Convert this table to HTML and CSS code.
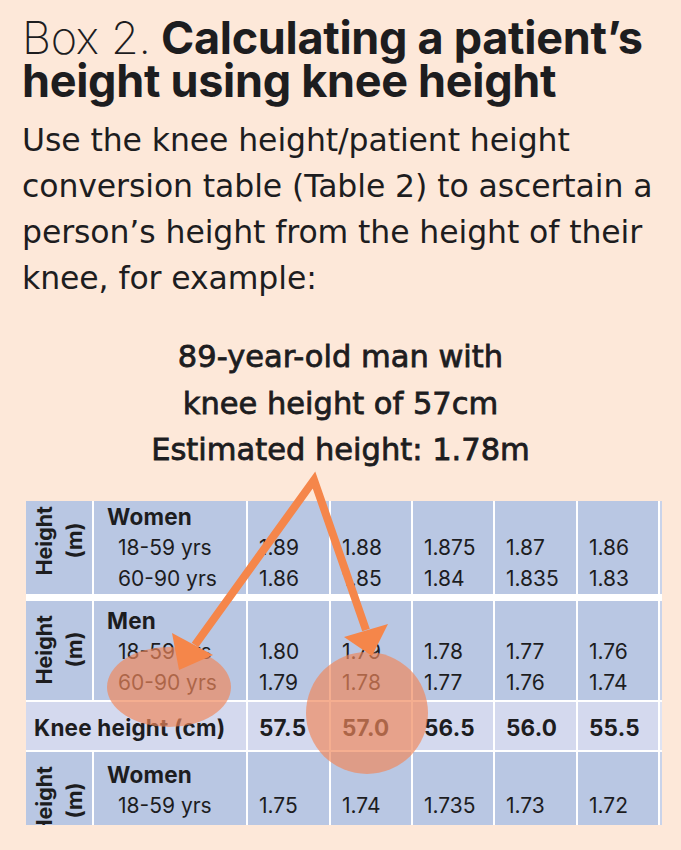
FILE: index.html
```html
<!DOCTYPE html>
<html lang="en">
<head>
<meta charset="utf-8">
<title>Box 2</title>
<link rel="stylesheet" href="styles.css">
</head>
<body>
<div class="page">
  <h1 class="title"><span class="title-light">Box 2.</span> <span class="title-bold">Calculating a patient’s<br>height using knee height</span></h1>
  <p class="intro">Use the knee height/patient height<br>conversion table (Table 2) to ascertain a<br>person’s height from the height of their<br>knee, for example:</p>
  <p class="example">89-year-old man with<br>knee height of 57cm<br>Estimated height: 1.78m</p>

  <div class="table">
    <div class="row group g1">
      <div class="cell side"><span class="vert">Height<br>(m)</span></div>
      <div class="cell labels"><div class="sex">Women</div><div class="age">18-59 yrs</div><div class="age">60-90 yrs</div></div>
      <div class="cell vals"><div class="blank"></div><div>1.89</div><div>1.86</div></div>
      <div class="cell vals"><div class="blank"></div><div>1.88</div><div>1.85</div></div>
      <div class="cell vals"><div class="blank"></div><div>1.875</div><div>1.84</div></div>
      <div class="cell vals"><div class="blank"></div><div>1.87</div><div>1.835</div></div>
      <div class="cell vals"><div class="blank"></div><div>1.86</div><div>1.83</div></div>
      <div class="cell strip"></div>
    </div>
    <div class="row group g2">
      <div class="cell side"><span class="vert">Height<br>(m)</span></div>
      <div class="cell labels"><div class="sex">Men</div><div class="age">18-59 yrs</div><div class="age">60-90 yrs</div></div>
      <div class="cell vals"><div class="blank"></div><div>1.80</div><div>1.79</div></div>
      <div class="cell vals"><div class="blank"></div><div>1.79</div><div>1.78</div></div>
      <div class="cell vals"><div class="blank"></div><div>1.78</div><div>1.77</div></div>
      <div class="cell vals"><div class="blank"></div><div>1.77</div><div>1.76</div></div>
      <div class="cell vals"><div class="blank"></div><div>1.76</div><div>1.74</div></div>
      <div class="cell strip"></div>
    </div>
    <div class="row knee">
      <div class="cell knee-label">Knee height (cm)</div>
      <div class="cell knee-val">57.5</div>
      <div class="cell knee-val">57.0</div>
      <div class="cell knee-val">56.5</div>
      <div class="cell knee-val">56.0</div>
      <div class="cell knee-val">55.5</div>
      <div class="cell strip"></div>
    </div>
    <div class="row group g3">
      <div class="cell side"><span class="vert">Height<br>(m)</span></div>
      <div class="cell labels"><div class="sex">Women</div><div class="age">18-59 yrs</div></div>
      <div class="cell vals"><div class="blank"></div><div>1.75</div></div>
      <div class="cell vals"><div class="blank"></div><div>1.74</div></div>
      <div class="cell vals"><div class="blank"></div><div>1.735</div></div>
      <div class="cell vals"><div class="blank"></div><div>1.73</div></div>
      <div class="cell vals"><div class="blank"></div><div>1.72</div></div>
      <div class="cell strip"></div>
    </div>
  </div>

  <svg class="overlay" width="681" height="850" viewBox="0 0 681 850" aria-hidden="true">
    <ellipse cx="169" cy="687" rx="62" ry="40" class="spot"/>
    <circle cx="367" cy="713" r="61" class="spot"/>
    <polyline points="195,645 314,480 366,630" class="arrow-line"/>
    <polygon points="172,633 213,655 179,670" class="arrow-head"/>
    <polygon points="344,637 388,624 372,656" class="arrow-head"/>
  </svg>
</div>
</body>
</html>
```
FILE: styles.css
```css
html, body {
  margin: 0;
  padding: 0;
  background: #fde8d9;
}
.page {
  position: relative;
  width: 681px;
  height: 850px;
  overflow: hidden;
  background: #fde8d9;
  color: #1d1d1f;
  font-family: Inter, "Liberation Sans", sans-serif;
}
.title {
  margin: 0;
  padding: 16px 0 0 22px;
  font-size: 45px;
  line-height: 43px;
  letter-spacing: -0.3px;
  font-weight: 700;
}
.title-light {
  font-weight: 200;
}
.intro {
  margin: 15px 0 0 22px;
  font-family: "DejaVu Sans", Inter, sans-serif;
  font-size: 31.5px;
  line-height: 46px;
  font-weight: 400;
  letter-spacing: -0.1px;
  width: 659px;
}
.example {
  margin: 33px 0 0 0;
  text-align: center;
  font-family: "DejaVu Sans", Inter, sans-serif;
  font-size: 30.5px;
  line-height: 46.5px;
  font-weight: 400;
  -webkit-text-stroke: 0.8px #1d1d1f;
}
.table {
  margin: 27px 0 0 26px;
  width: 636px;
  height: 324px;
  overflow: hidden;
  background: #ffffff;
  display: flex;
  flex-direction: column;
  gap: 2px;
}
.row {
  display: grid;
  grid-template-columns: 66px 152px 81px 80px 80px 81px 80px 2px;
  column-gap: 2px;
  flex: none;
}
.g1 { height: 92px; margin-bottom: 6px; }
.g2 { height: 99px; }
.knee { height: 48px; }
.g3 { height: 99px; }
.cell {
  background: #b9c7e3;
  font-size: 21px;
  line-height: 31px;
}
.strip {
  background: #c9d3ea;
}
.side {
  display: flex;
  align-items: center;
  justify-content: center;
}
.g1 .side { padding-bottom: 12px; }
.vert {
  writing-mode: vertical-rl;
  transform: rotate(180deg);
  font-weight: 700;
  text-align: center;
  font-size: 21.5px;
  line-height: 30px;
}
.labels, .vals {
  display: flex;
  flex-direction: column;
}
.g1 .labels { padding-top: 0; }
.g1 .vals { padding-top: 0; }
.g2 .labels, .g2 .vals { padding-top: 4px; }
.g3 .labels, .g3 .vals { padding-top: 7px; }
.sex {
  padding-left: 13px;
  font-weight: 700;
  font-size: 22.5px;
  letter-spacing: 0.2px;
}
.age {
  padding-left: 24px;
}
.blank { height: 31px; }
.vals {
  padding-left: 11px;
}
.knee .cell {
  background: #d4d9ee;
  font-weight: 700;
  font-size: 22.5px;
  letter-spacing: 0.2px;
  display: flex;
  align-items: center;
  padding-top: 3px;
}
.knee .strip { background: #dfe3f3; }
.knee-label {
  grid-column: span 2;
  padding-left: 8px;
}
.knee-val {
  padding-left: 11px;
}
.overlay {
  position: absolute;
  left: 0;
  top: 0;
  pointer-events: none;
}
.spot {
  fill: rgba(240, 136, 92, 0.68);
}
.arrow-line {
  fill: none;
  stroke: #f5864a;
  stroke-width: 8;
  stroke-linejoin: miter;
}
.arrow-head {
  fill: #f5864a;
}
```
